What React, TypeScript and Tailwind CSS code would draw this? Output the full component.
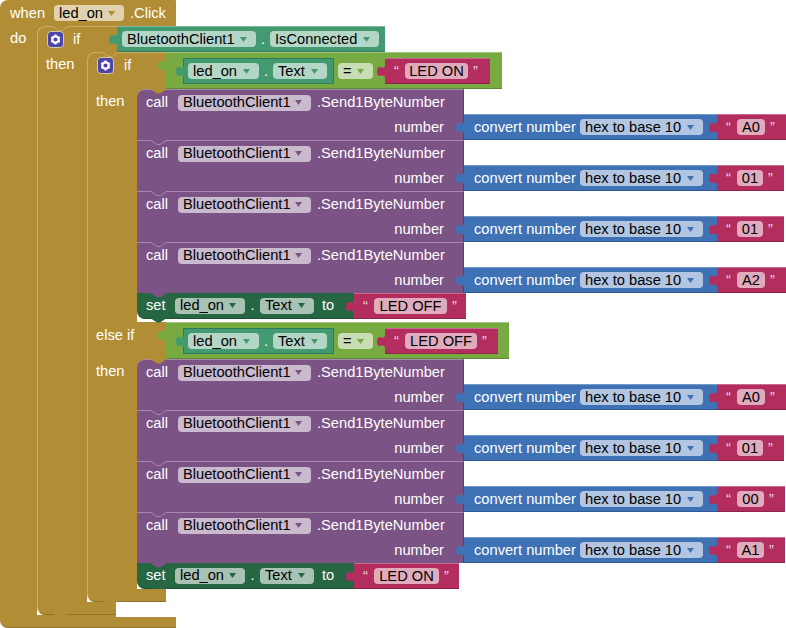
import React from "react";

const Arrow = ({ c }: { c: string }) => (
  <svg width="7" height="5" viewBox="0 0 7 5" className="shrink-0"><path d="M0 0h7L3.5 5z" fill={c} /></svg>
);

const Field = ({ t, w, c, on = "bg-white/60" }: { t: string; w: string; c: string; on?: string }) => (
  <span className={`flex h-[16px] items-center justify-between rounded-[4px] pl-[5px] pr-[9px] text-black ${on} ${w}`}>
    <span>{t}</span>
    <Arrow c={c} />
  </span>
);

const Tab = ({ fill, cls = "top-[6px]" }: { fill: string; cls?: string }) => (
  <svg width="9" height="13" viewBox="0 0 9 13" className={`absolute left-[-8px] ${cls}`}>
    <path d="M9 0H8C8 2.6 6 3 3.4 2.2 1.4 1.6 0 2.6 0 6.5S1.4 11.4 3.4 10.8C6 10 8 10.4 8 13H9z" fill={fill} />
  </svg>
);

const Notch = ({ fill, cls, line }: { fill: string; cls: string; line?: string }) => (
  <svg width="17" height="6" viewBox="0 0 17 6" className={`absolute ${cls}`}>
    <path d="M0 0L5.5 3.6Q6.5 4.6 8 4.6H9Q10.5 4.6 11.5 3.6L17 0Z" fill={fill} />
    {line ? <path d="M0 0L5.5 3.6Q6.5 4.6 8 4.6H9Q10.5 4.6 11.5 3.6L17 0" fill="none" stroke={line} /> : null}
  </svg>
);

const Gear = () => (
  <span className="flex h-[17px] w-[17px] items-center justify-center rounded-[4px] border border-[#d6c9a6] bg-[#4a45a6]">
    <svg width="13" height="13" viewBox="0 0 13 13">
      <circle cx="6.5" cy="6.5" r="3.2" fill="none" stroke="#fff" strokeWidth="2.2" />
      <g stroke="#fff" strokeWidth="2" strokeLinecap="butt">
        <path d="M6.5 1.6V3.2M6.5 9.8v1.6M2.26 4.05l1.4.8M9.34 8.15l1.4.8M2.26 8.95l1.4-.8M9.34 4.85l1.4-.8" />
      </g>
    </svg>
  </span>
);

const Str = ({ t, w, fw }: { t: string; w: string; fw: string }) => (
  <div className={`relative flex h-[26px] shrink-0 items-center border-y border-t-[#c76b8f] border-b-[#8f2449] bg-[#b32d5e] pl-[9px] ${w}`}>
    <Tab fill="#b32d5e" />
    <span className="w-[11px] text-[#f0d5e0]">“</span>
    <span className={`flex h-[16px] items-center justify-center rounded-[4px] bg-white/60 text-black ${fw}`}>{t}</span>
    <span className="ml-[5px] text-[#f0d5e0]">”</span>
  </div>
);

const Compare = ({ t, w, sw, fw }: { t: string; w: string; sw: string; fw: string }) => (
  <div className={`relative flex h-[37px] shrink-0 items-start border-y border-t-[#a5c57f] border-b-[#5f8934] bg-[#77ab41] pl-[17px] pt-[5px] ${w}`}>
    <Tab fill="#77ab41" />
    <div className="relative flex h-[26px] w-[151px] items-center border border-[#2f7a5a] bg-[#439970] pl-[4px]">
      <Tab fill="#439970" />
      <Field t="led_on" w="w-[71px]" c="#439970" />
      <span className="w-[14px] text-center text-white">.</span>
      <Field t="Text" w="w-[54px]" c="#439970" />
    </div>
    <div className="ml-[4px] flex h-[26px] items-center">
      <Field t="=" w="w-[35px]" c="#77ab41" />
    </div>
    <div className="ml-[12px]">
      <Str t={t} w={sw} fw={fw} />
    </div>
  </div>
);

const Call = ({ v, w, fw, first }: { v: string; w: string; fw: string; first?: boolean }) => (
  <div className="flex items-end">
    <div className="w-[327px] shrink-0 bg-[#b18e35]">
      <div className={`relative h-[51px] border-r border-t border-r-[#5f3f66] border-t-[#a78bad] bg-[#7c5385] ${first ? "rounded-tl-[8px]" : ""}`}>
        <Notch fill={first ? "#b18e35" : "#7c5385"} line={first ? undefined : "#a78bad"} cls="left-[13px] top-[-1px]" />
        <div className="flex h-[25px] items-center pl-[9px] text-white">
          <span className="w-[32px]">call</span>
          <Field t="BluetoothClient1" w="w-[133px]" c="#7c5385" />
          <span className="ml-[6px]">.Send1ByteNumber</span>
        </div>
        <div className="flex h-[25px] items-center justify-end pr-[19px] text-white">number</div>
      </div>
    </div>
    <div className="relative flex h-[26px] w-[253px] shrink-0 items-center border-y border-t-[#7598cb] border-b-[#2f5a95] bg-[#3f71b5] pl-[10px] text-white">
      <Tab fill="#3f71b5" />
      <span className="w-[106px]">convert number</span>
      <Field t="hex to base 10" w="w-[123px]" c="#3f71b5" />
    </div>
    <Str t={v} w={w} fw={fw} />
  </div>
);

const SetBlock = ({ t, w, fw }: { t: string; w: string; fw: string }) => (
  <div className="flex">
    <div className="relative flex h-[26px] w-[217px] shrink-0 items-center rounded-bl-[8px] border-b border-b-[#1d5034] bg-[#266643] pl-[9px] text-white">
      <Notch fill="#7c5385" cls="left-[13px] top-0" />
      <Notch fill="#266643" cls="left-[13px] top-[25px]" />
      <span className="w-[29px]">set</span>
      <Field t="led_on" w="w-[70px]" c="#266643" />
      <span className="w-[15px] text-center">.</span>
      <Field t="Text" w="w-[54px]" c="#266643" />
      <span className="ml-[8px]">to</span>
    </div>
    <Str t={t} w={w} fw={fw} />
  </div>
);

const Stack = ({ rows, set }: { rows: [string, string, string][]; set: [string, string, string] }) => (
  <div className="flex flex-col">
    {rows.map((r, i) => (
      <Call key={i} v={r[0]} w={r[1]} fw={r[2]} first={i === 0} />
    ))}
    <SetBlock t={set[0]} w={set[1]} fw={set[2]} />
  </div>
);

const InnerIf = () => (
  <div className="flex flex-col">
    <div className="flex">
      <div className="w-[79px] shrink-0 bg-[#b18e35]">
        <div className="relative flex h-[37px] rounded-tl-[8px] border-l border-t border-[#c9ad6c] bg-[#b18e35] pl-[9px] pt-[4px] text-white">
          <Notch fill="#b18e35" line="#c9ad6c" cls="left-[14px] top-[-1px]" />
          <Gear />
          <span className="ml-[10px]">if</span>
        </div>
      </div>
      <Compare t="LED ON" w="w-[336px]" sw="w-[105px]" fw="w-[63px]" />
    </div>
    <div className="flex">
      <div className="h-[233px] w-[50px] shrink-0 border-l border-[#c9ad6c] bg-[#b18e35] pl-[8px] pt-[4px] text-white">then</div>
      <Stack
        rows={[
          ["A0", "w-[69px]", "w-[28px]"],
          ["01", "w-[67px]", "w-[26px]"],
          ["01", "w-[67px]", "w-[26px]"],
          ["A2", "w-[69px]", "w-[28px]"],
        ]}
        set={["LED OFF", "w-[112px]", "w-[73px]"]}
      />
    </div>
    <div className="flex">
      <div className="flex h-[37px] w-[79px] shrink-0 items-center border-l border-[#c9ad6c] bg-[#b18e35] pb-[10px] pl-[8px] text-white">else if</div>
      <Compare t="LED OFF" w="w-[343px]" sw="w-[113px]" fw="w-[72px]" />
    </div>
    <div className="flex">
      <div className="h-[230px] w-[50px] shrink-0 border-l border-[#c9ad6c] bg-[#b18e35] pl-[8px] pt-[4px] text-white">then</div>
      <Stack
        rows={[
          ["A0", "w-[69px]", "w-[28px]"],
          ["01", "w-[67px]", "w-[26px]"],
          ["00", "w-[68px]", "w-[27px]"],
          ["A1", "w-[68px]", "w-[27px]"],
        ]}
        set={["LED ON", "w-[105px]", "w-[65px]"]}
      />
    </div>
    <div className="relative h-[13px] w-[79px] rounded-bl-[8px] border-b border-l border-b-[#8f7329] border-l-[#c9ad6c] bg-[#b18e35]">
      <Notch fill="#b18e35" cls="left-[14px] top-[11px]" />
    </div>
  </div>
);

const MiddleIf = () => (
  <div className="flex flex-col">
    <div className="flex">
      <div className="w-[80px] shrink-0 bg-[#b18e35]">
        <div className="relative flex h-[26px] rounded-tl-[8px] border-l border-t border-[#c9ad6c] bg-[#b18e35] pl-[9px] pt-[4px] text-white">
          <Notch fill="#b18e35" line="#c9ad6c" cls="left-[14px] top-[-1px]" />
          <Gear />
          <span className="ml-[9px]">if</span>
        </div>
      </div>
      <div className="relative flex h-[26px] w-[268px] shrink-0 items-center border-y border-t-[#7cb89d] border-b-[#2f7a5a] bg-[#439970] pl-[5px] text-white">
        <Tab fill="#439970" />
        <Field t="BluetoothClient1" w="w-[134px]" c="#439970" />
        <span className="w-[14px] text-center">.</span>
        <Field t="IsConnected" w="w-[109px]" c="#439970" />
      </div>
    </div>
    <div className="flex">
      <div className="w-[50px] shrink-0 border-l border-[#c9ad6c] bg-[#b18e35] pl-[8px] pt-[4px] text-white">then</div>
      <InnerIf />
    </div>
    <div className="relative h-[13px] w-[79px] rounded-bl-[8px] border-b border-l border-b-[#8f7329] border-l-[#c9ad6c] bg-[#b18e35]">
      <Notch fill="#b18e35" cls="left-[14px] top-[11px]" />
    </div>
    <div className="h-[2px] w-[79px] bg-[#b18e35]" />
  </div>
);

export default function App() {
  return (
    <div className="flex h-[628px] w-[786px] flex-col overflow-hidden bg-white font-['Liberation_Sans',Arial,sans-serif] text-[14.67px] leading-[17px]">
      <div className="flex h-[26px] w-[176px] shrink-0 items-center rounded-tl-[8px] rounded-tr-[1px] bg-[#b18e35] pl-[10px] text-white">
        <span className="w-[44px]">when</span>
        <Field t="led_on" w="w-[70px]" c="#b18e35" />
        <span className="ml-[6px]">.Click</span>
      </div>
      <div className="flex h-[591px] shrink-0">
        <div className="w-[37px] shrink-0 bg-[#b18e35] pl-[10px] pt-[4px] text-white">do</div>
        <MiddleIf />
      </div>
      <div className="h-[11px] w-[176px] shrink-0 rounded-bl-[8px] border-b border-b-[#8f7329] bg-[#b18e35]" />
    </div>
  );
}
